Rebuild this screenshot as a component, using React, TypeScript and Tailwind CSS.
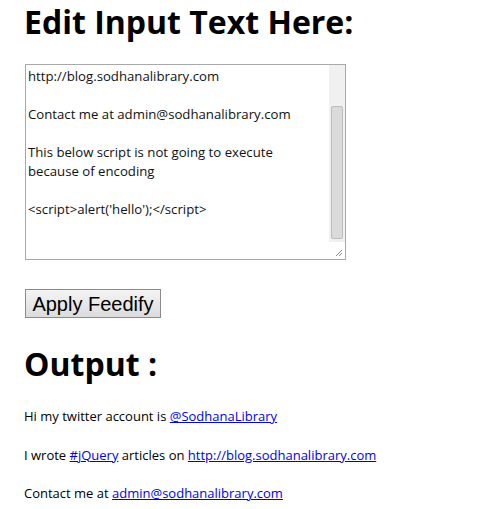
import { useEffect, useRef } from 'react';

const inputText = `Hi my twitter account is @SodhanaLibrary

I wrote #jQuery articles on http://blog.sodhanalibrary.com

Contact me at admin@sodhanalibrary.com

This below script is not going to execute because of encoding

<script>alert('hello');</script>

`;

const App = () => {
  const areaRef = useRef<HTMLTextAreaElement>(null);

  // the screenshot shows the box scrolled to the end
  useEffect(() => {
    if (areaRef.current) {
      areaRef.current.scrollTop = areaRef.current.scrollHeight;
    }
  }, []);

  return (
    <div className="min-h-screen bg-white px-[24px] text-black font-['Open_Sans',sans-serif]">
      <h1 className="text-[32px] font-bold leading-[44px]">Edit Input Text Here:</h1>

      {/* textarea + a drawn scrollbar, since the headless browser hides native ones */}
      <div className="mt-[20px] ml-px flex h-[196px] w-[321px] border border-[#a9a9a9] bg-white">
        <textarea
          ref={areaRef}
          defaultValue={inputText}
          className="h-full min-w-0 flex-1 resize-none overflow-hidden border-0 bg-white py-[2px] pl-[2px] pr-[4px] text-[13.2px] leading-[19px] text-[#111] outline-none"
        />
        <div className="flex w-[16px] flex-col">
          <div className="flex flex-1 flex-col justify-end bg-[#f0f0f0] pb-[3px]">
            <div className="mx-[2px] h-[133px] rounded-[2px] border border-[#bcbcbc] bg-[#dadada]" />
          </div>
          <div className="flex h-[17px] items-end justify-end bg-white">
            <svg width="16" height="16" viewBox="0 0 16 16">
              <path d="M13 7 L7 13 M13 10 L10 13" stroke="#8a8a8a" strokeWidth="1" fill="none" />
            </svg>
          </div>
        </div>
      </div>

      <button className="mt-[29px] ml-px block h-[29px] w-[136px] border border-[#8a8a8a] bg-gradient-to-b from-[#f4f4f4] to-[#dcdcdc] text-[20px] leading-none font-['Liberation_Sans',Arial,sans-serif] text-black">
        Apply Feedify
      </button>

      <h1 className="mt-[26px] text-[32px] font-bold leading-[40px]">Output :</h1>

      <div className="mt-[23px] text-[13px] leading-[19px]">
        <p>
          Hi my twitter account is{' '}
          <a href="#" className="text-[#0000ee] underline">@SodhanaLibrary</a>
        </p>
        <p className="mt-[19.5px]">
          I wrote <a href="#" className="text-[#0000ee] underline">#jQuery</a> articles on{' '}
          <a href="#" className="text-[#0000ee] underline">http://blog.sodhanalibrary.com</a>
        </p>
        <p className="mt-[19.5px]">
          Contact me at{' '}
          <a href="#" className="text-[#0000ee] underline">admin@sodhanalibrary.com</a>
        </p>
      </div>
    </div>
  );
};

export default App;
